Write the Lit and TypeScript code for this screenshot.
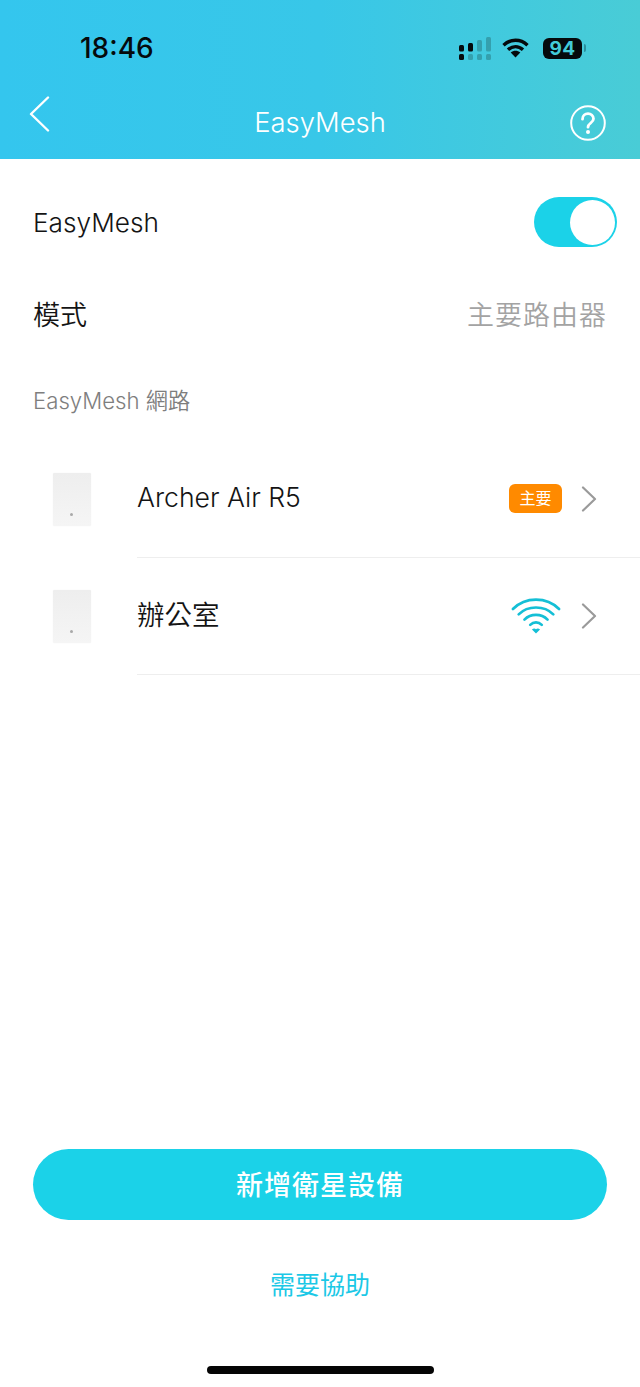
import { LitElement, html, css, svg } from "lit";
import { customElement } from "lit/decorators.js";

const chevron = html`<svg class="chev" width="16" height="26" viewBox="0 0 16 26"><path d="M2 1.5 L14 13 L2 24.5" fill="none" stroke="#9a9a9a" stroke-width="2.2" stroke-linecap="round" stroke-linejoin="round"/></svg>`;

const routerImg = html`<div class="router"><span class="led"></span></div>`;

const meshWifi = html`<svg class="mesh" width="50" height="38.5" viewBox="0 0 52 40" fill="none" stroke="#14bfd6" stroke-linecap="round" stroke-width="2.8">
  <path d="M2 12.5 C15 -0.5 37 -0.5 50 12.5"/>
  <path d="M8 18 C17.5 8.5 34.5 8.5 44 18"/>
  <path d="M14 23.5 C20.5 17 31.5 17 38 23.5"/>
  <path d="M20 29 C23.5 25.5 28.5 25.5 32 29"/>
  <path d="M26 38 L21.8 33.8 C23.4 32.2 25.2 32.6 26 33.6 C26.8 32.6 28.6 32.2 30.2 33.8 Z" fill="#14bfd6" stroke="none"/>
</svg>`;

@customElement("app-root")
export class AppRoot extends LitElement {
  static styles = css`
    :host {
      display: flex;
      flex-direction: column;
      width: 640px;
      height: 1387px;
      overflow: hidden;
      background: #fff;
      color: #141414;
      font-family: Inter, "Noto Sans CJK TC", sans-serif;
    }
    .header {
      height: 159px;
      flex: none;
      box-sizing: border-box;
      background: linear-gradient(90deg, #34c6ee 0%, #38c7e8 50%, #49ccd6 100%);
      display: flex;
      flex-direction: column;
    }
    .status {
      height: 74px;
      padding: 22px 54px 0 80px;
      box-sizing: border-box;
      display: flex;
      justify-content: space-between;
      align-items: flex-start;
    }
    .time {
      font-size: 28px;
      font-weight: 500;
      line-height: 52px;
      color: #050a0c;
    }
    .status-icons {
      display: flex;
      align-items: center;
      gap: 11px;
      height: 52px;
    }
    .batt-wrap { display: flex; align-items: center; gap: 2px; margin-left: 3px; }
    .batt {
      width: 39px;
      height: 21px;
      border-radius: 6px;
      background: #050a0c;
      color: #43cbd9;
      font-size: 19px;
      font-weight: 700;
      line-height: 21px;
      text-align: center;
      letter-spacing: 0.5px;
    }
    .batt-cap { width: 2px; height: 8px; border-radius: 0 2px 2px 0; background: #2b8f9c; }
    .nav {
      flex: 1;
      display: grid;
      grid-template-columns: 60px 1fr 60px;
      align-items: center;
      padding: 0 34px;
      box-sizing: border-box;
    }
    .nav .title {
      text-align: center;
      color: #fff;
      font-size: 27.4px;
      font-weight: 350;
      margin-top: 11px;
      white-space: nowrap;
    }
    .nav .back { margin: -5px 0 0 -5px; display: block; }
    .nav .help { justify-self: end; margin-top: 13px; display: block; }

    .row {
      display: flex;
      align-items: center;
      justify-content: space-between;
      padding: 0 23px 0 33px;
      font-size: 26.2px;
      font-weight: 350;
    }
    .row-switch { height: 94px; margin-top: 16px; }
    .row-mode { height: 92px; }
    .cjk-label { font-size: 27px; margin-top: -4px; }
    .mode-val { color: #a3a3a3; font-size: 27px; letter-spacing: 1px; padding-right: 10px; margin-top: -4px; }
    .section {
      height: 80px;
      display: flex;
      align-items: center;
      padding: 0 0 4px 33px;
      box-sizing: border-box;
      font-size: 22.2px;
      font-weight: 350;
      color: #7e7e7e;
    }
    .switch {
      width: 83px;
      height: 50px;
      border-radius: 25px;
      background: #1bd2e8;
      position: relative;
    }
    .knob {
      position: absolute;
      right: 2px;
      top: 2.5px;
      width: 45px;
      height: 45px;
      border-radius: 50%;
      background: #fff;
    }
    .device {
      height: 117px;
      display: flex;
      align-items: center;
      padding-left: 53px;
    }
    .router {
      width: 38px;
      height: 53px;
      flex: none;
      position: relative;
      border-radius: 1px;
      background: linear-gradient(180deg, #eeeeee, #f5f5f5);
      box-shadow: 0 0 1px #e8e8e8;
    }
    .led {
      position: absolute;
      left: 17px;
      bottom: 10px;
      width: 3px;
      height: 3px;
      border-radius: 50%;
      background: #a9a9a9;
    }
    .dev-body {
      flex: 1;
      align-self: stretch;
      margin-left: 46px;
      padding-right: 43px;
      border-bottom: 1px solid #eeeeee;
      display: flex;
      align-items: center;
      justify-content: space-between;
      box-sizing: border-box;
    }
    .dev-name { font-size: 26.6px; font-weight: 350; margin-top: -5px; }
    .dev-name.cjk { font-size: 27.5px; margin-top: -7px; }
    .dev-right { display: flex; align-items: center; gap: 19px; margin-top: -1px; }
    .badge {
      width: 53px;
      height: 29px;
      border-radius: 6px;
      background: #ff8a00;
      color: #fff;
      font-size: 16px;
      line-height: 29px;
      text-align: center;
    }
    .chev { display: block; }
    .mesh { display: block; margin: 2px 1px 0 0; }
    .spacer { flex: 1; }
    .footer {
      display: flex;
      flex-direction: column;
      align-items: center;
      flex: none;
    }
    .cta {
      width: 574px;
      height: 71px;
      border-radius: 36px;
      background: #1bd2e8;
      color: #fff;
      font-size: 27px;
      font-weight: 500;
      line-height: 73px;
      text-align: center;
      letter-spacing: 1px;
    }
    .need {
      margin-top: 43px;
      height: 44px;
      line-height: 44px;
      font-size: 25px;
      color: #1bc8e6;
    }
    .home {
      margin-top: 59px;
      margin-bottom: 13px;
      width: 227px;
      height: 8px;
      border-radius: 4px;
      background: #050505;
    }
  `;

  render() {
    const bars = svg`
      <rect x="0" y="8" width="5" height="6.5" rx="1.5" fill="#050a0c"/>
      <rect x="0" y="17" width="5" height="6" rx="1.5" fill="#050a0c"/>
      <rect x="9" y="6" width="5" height="8.5" rx="1.5" fill="#050a0c"/>
      <rect x="9" y="17" width="5" height="6" rx="1.5" fill="#34a0ae"/>
      <rect x="18" y="3" width="5" height="11.5" rx="1.5" fill="#34a0ae"/>
      <rect x="18" y="17" width="5" height="6" rx="1.5" fill="#34a0ae"/>
      <rect x="27" y="0" width="5" height="14.5" rx="1.5" fill="#34a0ae"/>
      <rect x="27" y="17" width="5" height="6" rx="1.5" fill="#34a0ae"/>`;
    return html`
      <div class="header">
        <div class="status">
          <span class="time">18:46</span>
          <div class="status-icons">
            <svg width="32" height="23" viewBox="0 0 32 23">${bars}</svg>
            <svg width="27" height="20" viewBox="0 0 27 20" fill="none" stroke="#050a0c" stroke-width="3.4">
              <path d="M1.5 7.2 C8.5 0.6 18.5 0.6 25.5 7.2"/>
              <path d="M6 11.8 C10.5 7.6 16.5 7.6 21 11.8"/>
              <path d="M13.5 19.5 L8.7 14.6 C11.5 12.2 15.5 12.2 18.3 14.6 Z" fill="#050a0c" stroke="none"/>
            </svg>
            <div class="batt-wrap"><div class="batt">94</div><div class="batt-cap"></div></div>
          </div>
        </div>
        <div class="nav">
          <svg class="back" width="22" height="36" viewBox="0 0 22 36"><path d="M19 1.5 L2 18 L19 34.5" fill="none" stroke="#fff" stroke-width="2.4" stroke-linecap="round" stroke-linejoin="round"/></svg>
          <div class="title">EasyMesh</div>
          <svg class="help" width="36" height="36" viewBox="0 0 36 36">
            <circle cx="18" cy="18" r="16.8" fill="none" stroke="#fff" stroke-width="2"/>
            <path d="M12.5 14.2 C12.5 6.8 23.5 7 23.5 13.8 C23.5 18 18 18 18 22.2" fill="none" stroke="#fff" stroke-width="2.8" stroke-linecap="round"/>
            <circle cx="18" cy="27" r="2" fill="#fff"/>
          </svg>
        </div>
      </div>

      <div class="row row-switch">
        <span>EasyMesh</span>
        <div class="switch"><div class="knob"></div></div>
      </div>
      <div class="row row-mode">
        <span class="cjk-label">模式</span>
        <span class="mode-val">主要路由器</span>
      </div>
      <div class="section">EasyMesh 網路</div>

      <div class="device">
        ${routerImg}
        <div class="dev-body">
          <span class="dev-name">Archer Air R5</span>
          <div class="dev-right"><span class="badge">主要</span>${chevron}</div>
        </div>
      </div>
      <div class="device">
        ${routerImg}
        <div class="dev-body">
          <span class="dev-name cjk">辦公室</span>
          <div class="dev-right">${meshWifi}${chevron}</div>
        </div>
      </div>

      <div class="spacer"></div>
      <div class="footer">
        <div class="cta">新增衛星設備</div>
        <div class="need">需要協助</div>
        <div class="home"></div>
      </div>
    `;
  }
}
